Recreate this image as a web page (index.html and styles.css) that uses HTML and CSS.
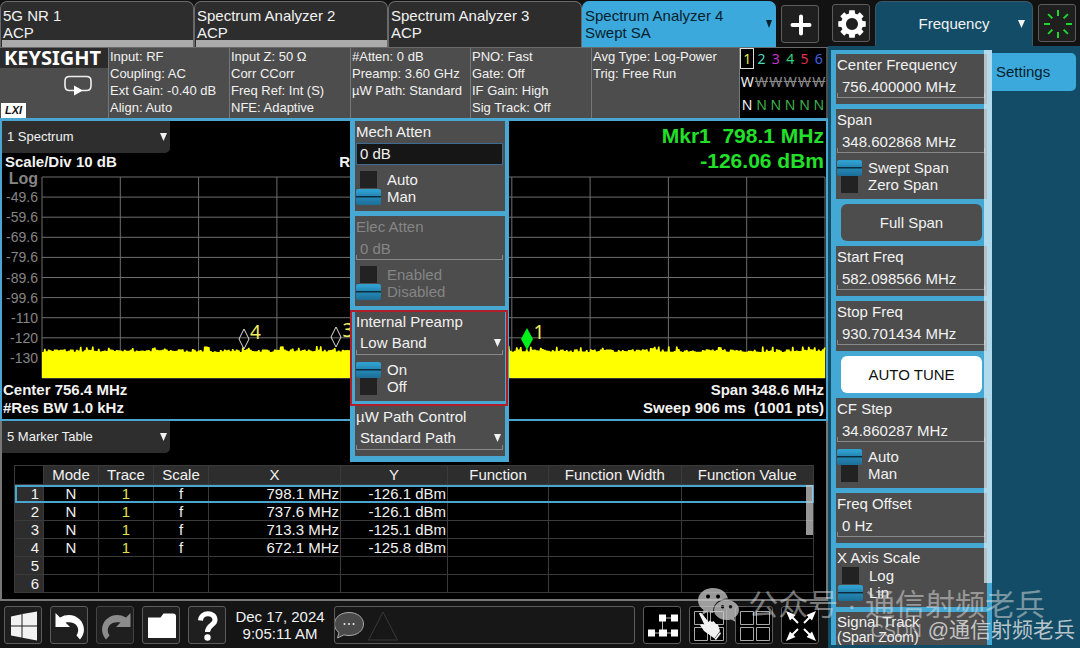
FILE: index.html
```html
<!DOCTYPE html>
<html lang="en">
<head>
<meta charset="utf-8">
<title>Spectrum Analyzer</title>
<link rel="stylesheet" href="styles.css">
</head>
<body>
<div class="app">
  <main class="main">
    <nav class="tabs">
      <button class="tab tab-busy"><span>5G NR 1</span><span>ACP</span></button>
      <button class="tab tab-busy"><span>Spectrum Analyzer 2</span><span>ACP</span></button>
      <button class="tab"><span>Spectrum Analyzer 3</span><span>ACP</span></button>
      <button class="tab tab-active"><span>Spectrum Analyzer 4</span><span>Swept SA</span><i class="arrow"></i></button>
      <button class="icon-btn tab-add" aria-label="Add screen">
        <svg width="38" height="38" viewBox="0 0 38 38"><path d="M19 10.500v17M10.500 19h17" stroke="#fff" stroke-width="4" stroke-linecap="round"/></svg>
      </button>
    </nav>

    <section class="meas">
      <div class="brand">
        <div class="logo">KEYSIGHT</div>
        <svg class="loop" width="30" height="22" viewBox="0 0 30 22"><path d="M11 15.500H6.500Q2 15.500 2 11V6Q2 1.500 6.500 1.500h17Q28 1.500 28 6v5q0 4.500-4.500 4.500H19" fill="none" stroke="#eee" stroke-width="1.600"/><path d="M11 10.500v10l9-5z" fill="#fff"/></svg>
        <div class="lxi">LXI</div>
      </div>
      <div class="meas-col"><span>Input: RF</span><span>Coupling: AC</span><span>Ext Gain: -0.40 dB</span><span>Align: Auto</span></div>
      <div class="meas-col"><span>Input Z: 50 Ω</span><span>Corr CCorr</span><span>Freq Ref: Int (S)</span><span>NFE: Adaptive</span></div>
      <div class="meas-col"><span>#Atten: 0 dB</span><span>Preamp: 3.60 GHz</span><span>µW Path: Standard</span></div>
      <div class="meas-col"><span>PNO: Fast</span><span>Gate: Off</span><span>IF Gain: High</span><span>Sig Track: Off</span></div>
      <div class="meas-col meas-last"><span>Avg Type: Log-Power</span><span>Trig: Free Run</span></div>
      <div class="traces">
        <b class="t1">1</b><b class="t2">2</b><b class="t3">3</b><b class="t4">4</b><b class="t5">5</b><b class="t6">6</b>
        <b>W</b><b class="off">W</b><b class="off">W</b><b class="off">W</b><b class="off">W</b><b class="off">W</b>
        <b>N</b><b class="on">N</b><b class="on">N</b><b class="on">N</b><b class="on">N</b><b class="on">N</b>
      </div>
    </section>

    <div class="windows">
      <section class="window window-active">
        <header class="spec-head">
          <div class="spec-left">
            <div class="drop win-title"><select aria-label="Spectrum window"><option>1 Spectrum</option></select><i class="arrow"></i></div>
            <div class="scale-row"><span>Scale/Div 10 dB</span><span>R</span></div>
          </div>
          <div class="mkr"><span>Mkr1&nbsp; 798.1 MHz</span><span>-126.06 dBm</span></div>
        </header>
        <div class="chart">
          <div class="y-axis"><b>Log</b><span>-49.6</span><span>-59.6</span><span>-69.6</span><span>-79.6</span><span>-89.6</span><span>-99.6</span><span>-110</span><span>-120</span><span>-130</span></div>
          <div class="plot">
            <svg class="plot-svg" viewBox="0 0 783 201" preserveAspectRatio="none"><path id="grid" class="grid"/><path id="trace" class="trace"/></svg>
            <div class="marker m4"><svg width="12" height="22" viewBox="0 0 12 22"><path d="M6 1l5 10-5 10L1 11z" fill="none" stroke="#ddd"/></svg><span>4</span></div>
            <div class="marker m3"><svg width="12" height="22" viewBox="0 0 12 22"><path d="M6 1l5 10-5 10L1 11z" fill="none" stroke="#ddd"/></svg><span>3</span></div>
            <div class="marker m1"><svg width="12" height="22" viewBox="0 0 12 22"><path d="M6 0l6 11-6 11L0 11z" fill="#00f01c"/></svg><span>1</span></div>
          </div>
        </div>
        <footer class="spec-foot">
          <div><span>Center 756.4 MHz</span><span>Span 348.6 MHz</span></div>
          <div><span>#Res BW 1.0 kHz</span><span>Sweep 906 ms&nbsp; (1001 pts)</span></div>
        </footer>
      </section>

      <section class="window window-table">
        <div class="drop win-title"><select aria-label="Marker table window"><option>5 Marker Table</option></select><i class="arrow"></i></div>
        <div class="table-wrap">
          <table>
            <colgroup><col class="c-n"><col class="c-s"><col class="c-s"><col class="c-s"><col class="c-x"><col class="c-y"><col class="c-f"><col class="c-w"><col class="c-w"></colgroup>
            <thead><tr><td class="corner"></td><th>Mode</th><th>Trace</th><th>Scale</th><th>X</th><th>Y</th><th>Function</th><th>Function Width</th><th>Function Value</th></tr></thead>
            <tbody>
              <tr class="selected"><th>1</th><td>N</td><td class="yl">1</td><td>f</td><td class="num">798.1 MHz</td><td class="num">-126.1 dBm</td><td></td><td></td><td></td></tr>
              <tr><th>2</th><td>N</td><td class="yl">1</td><td>f</td><td class="num">737.6 MHz</td><td class="num">-126.1 dBm</td><td></td><td></td><td></td></tr>
              <tr><th>3</th><td>N</td><td class="yl">1</td><td>f</td><td class="num">713.3 MHz</td><td class="num">-125.1 dBm</td><td></td><td></td><td></td></tr>
              <tr><th>4</th><td>N</td><td class="yl">1</td><td>f</td><td class="num">672.1 MHz</td><td class="num">-125.8 dBm</td><td></td><td></td><td></td></tr>
              <tr><th>5</th><td></td><td></td><td></td><td></td><td></td><td></td><td></td><td></td></tr>
              <tr><th>6</th><td></td><td></td><td></td><td></td><td></td><td></td><td></td><td></td></tr>
            </tbody>
          </table>
          <div class="table-thumb"></div>
        </div>
      </section>

      <aside class="popup">
        <div class="item">
          <label for="mech">Mech Atten</label>
          <input id="mech" class="value value-edit" value="0 dB">
          <div class="switch">
            <label><input type="radio" name="mech-mode">Auto</label>
            <label><input type="radio" name="mech-mode" checked>Man</label>
          </div>
        </div>
        <div class="item item-off">
          <label for="elec">Elec Atten</label>
          <input id="elec" class="value" value="0 dB" disabled>
          <div class="switch">
            <label><input type="radio" name="elec-mode" disabled>Enabled</label>
            <label><input type="radio" name="elec-mode" checked disabled>Disabled</label>
          </div>
        </div>
        <div class="item item-marked">
          <label for="preamp">Internal Preamp</label>
          <div class="drop"><select id="preamp" class="value"><option>Low Band</option></select><i class="arrow"></i></div>
          <div class="switch">
            <label><input type="radio" name="preamp-mode" checked>On</label>
            <label><input type="radio" name="preamp-mode">Off</label>
          </div>
        </div>
        <div class="item">
          <label for="path">µW Path Control</label>
          <div class="drop"><select id="path" class="value"><option>Standard Path</option></select><i class="arrow"></i></div>
        </div>
      </aside>
    </div>

    <footer class="toolbar">
      <button class="icon-btn" aria-label="Windows"><svg width="38" height="38" viewBox="0 0 38 38"><path d="M6 9.500l10.500-2.200v11.200H6zM17.500 7L32 4.500v14H17.500zM6 19.500h10.500v11L6 28.500zM17.500 19.500H32v14l-14.500-2.800z" fill="#f2f2f2"/></svg></button>
      <button class="icon-btn" aria-label="Undo"><svg width="38" height="38" viewBox="0 0 38 38"><path d="M4.500 6L9 10.500C20 4 33 11 33 23Q32.500 28.500 29 32.500L25.500 28.500C30.500 20.500 24 13.500 14.500 15.500L19 20H4.500z" fill="#fff"/></svg></button>
      <button class="icon-btn dim" aria-label="Redo"><svg width="38" height="38" viewBox="0 0 38 38"><path d="M33.500 6L29 10.500C18 4 5 11 5 23Q5.500 28.500 9 32.500L12.500 28.500C7.500 20.500 14 13.500 23.500 15.500L19 20H33.500z" fill="#8c8c8c"/></svg></button>
      <button class="icon-btn" aria-label="Files"><svg width="38" height="38" viewBox="0 0 38 38"><path d="M5 10.500h12.500l3-4h9.500q3 0 3 3V31H5z" fill="#fff"/></svg></button>
      <button class="icon-btn" aria-label="Help"><svg width="38" height="38" viewBox="0 0 38 38"><path d="M11.500 13.500C12 4.500 26 4.500 26 13C26 18.500 18.500 17.500 18.500 25" fill="none" stroke="#fff" stroke-width="5"/><circle cx="18.500" cy="30.500" r="3.200" fill="#fff"/></svg></button>
      <div class="clock"><span>Dec 17, 2024</span><span>9:05:11 AM</span></div>
      <div class="message">
        <svg width="72" height="36" viewBox="0 0 72 36"><path d="M14 5.500c8.500 0 14.500 5 14.500 11.500S22.500 28.500 14 28.500c-2 0-3.500-.2-5-.7L2.500 31l1.500-5.500C1 23.500-.5 20.500-.5 17-.5 10.500 5.500 5.500 14 5.500z" fill="#4a4a4a" stroke="#aaa"/><g fill="#eee"><circle cx="9.500" cy="17" r="1"/><circle cx="14" cy="17" r="1"/><circle cx="18.500" cy="17" r="1"/></g><path d="M48 5L62.500 33h-29z" fill="none" stroke="#383838"/></svg>
      </div>
      <button class="icon-btn black" aria-label="Sequencer"><svg width="38" height="38" viewBox="0 0 38 38"><path d="M18.500 11h12M18.500 11v15M7 26h24" stroke="#bbb" fill="none"/><path d="M15 7.500h7v7h-7zM27 7.500h7v7h-7zM4 22.500h7v7H4zM15 22.500h8v7h-8zM27 22.500h7v7h-7z" fill="#fff"/></svg></button>
      <button class="icon-btn black" aria-label="Touch layout"><svg width="38" height="38" viewBox="0 0 38 38"><path d="M4.500 4.500h13v13h-13zM20.500 4.500h13v13h-13zM4.500 20.500h13v13h-13zM20.500 20.500h13v13h-13z" fill="none" stroke="#aaa"/><path d="M9 6.500q1-1.500 3 0l6.500 8.500 1-1.500 2.500 1.500 1.500-1 2.500 3 2 .5 2 6.500-5.500 7.500-10.500-7.500-4-6 2-1 2.500 1zM24.500 32l5.500-7 1 1.500-5 6.500z" fill="#f2f2f2"/></svg></button>
      <button class="icon-btn black" aria-label="Grid layout"><svg width="38" height="38" viewBox="0 0 38 38"><path d="M4.500 4.500h13v13h-13zM20.500 4.500h13v13h-13zM4.500 20.500h13v13h-13zM20.500 20.500h13v13h-13z" fill="none" stroke="#aaa"/></svg></button>
      <button class="icon-btn black" aria-label="Full screen"><svg width="38" height="38" viewBox="0 0 38 38"><path d="M7 7l9 9M31 7l-9 9M7 31l9-9M31 31l-9-9" stroke="#fff" stroke-width="2"/><path d="M4 4l9.500 4-5.500 5.500zM34 4l-9.500 4 5.500 5.500zM4 34l9.500-4L8 24.500zM34 34l-9.500-4 5.500-5.500z" fill="#fff"/></svg></button>
    </footer>
  </main>

  <aside class="side">
    <header class="side-head">
      <button class="icon-btn" aria-label="Setup"><svg width="38" height="38" viewBox="0 0 38 38"><path id="gear-path" fill="#fff" fill-rule="evenodd"/></svg></button>
      <div class="drop side-title"><select aria-label="Menu"><option>Frequency</option></select><i class="arrow"></i></div>
      <button class="icon-btn" aria-label="Sweep status"><svg width="38" height="38" viewBox="0 0 38 38"><path d="M19 5v6M19 27v6M5 19h6M27 19h6M9.100 9.100l4.300 4.300M24.600 24.600l4.300 4.300M28.900 9.100l-4.300 4.300M13.400 24.600l-4.300 4.300" stroke="#1fd62e" stroke-width="2"/></svg></button>
    </header>
    <div class="side-body">
      <div class="menu">
        <div class="item"><label for="cf">Center Frequency</label><input id="cf" class="value" value="756.400000 MHz"></div>
        <div class="item">
          <label for="span">Span</label><input id="span" class="value" value="348.602868 MHz">
          <div class="switch">
            <label><input type="radio" name="span-mode" checked>Swept Span</label>
            <label><input type="radio" name="span-mode">Zero Span</label>
          </div>
        </div>
        <button class="menu-btn">Full Span</button>
        <div class="item"><label for="start">Start Freq</label><input id="start" class="value" value="582.098566 MHz"></div>
        <div class="item"><label for="stop">Stop Freq</label><input id="stop" class="value" value="930.701434 MHz"></div>
        <button class="menu-btn menu-btn-light">AUTO TUNE</button>
        <div class="item">
          <label for="step">CF Step</label><input id="step" class="value" value="34.860287 MHz">
          <div class="switch">
            <label><input type="radio" name="step-mode" checked>Auto</label>
            <label><input type="radio" name="step-mode">Man</label>
          </div>
        </div>
        <div class="item"><label for="offset">Freq Offset</label><input id="offset" class="value" value="0 Hz"></div>
        <fieldset class="item item-axis">
          <legend>X Axis Scale</legend>
          <div class="switch">
            <label><input type="radio" name="axis">Log</label>
            <label><input type="radio" name="axis" checked>Lin</label>
          </div>
        </fieldset>
        <div class="item item-track"><span>Signal Track</span><small>(Span Zoom)</small></div>
        <div class="menu-thumb"></div>
      </div>
      <button class="side-tab">Settings</button>
    </div>
  </aside>

  <div class="stamp stamp-top">
    <svg width="42" height="34" viewBox="0 0 42 34"><path fill-rule="evenodd" d="M15 0C6.500 0 0 5.500 0 12.500c0 4 2 7 5.500 9.500L4 27l5.500-3q3 1 6 1C14 17 20 10.500 30 10.500 28.500 4 22.500 0 15 0zM10 6.500a2 2 0 1 0 .1 0zM20 6.500a2 2 0 1 0 .1 0z" fill="#ccc"/><path fill-rule="evenodd" d="M28.500 12C21.500 12 16 16.500 16 22s5.500 10 12.500 10q2.500 0 4.500-.6l4.500 2.400-1.200-4Q41 26.500 41 22c0-5.500-5.500-10-12.500-10zM24.500 17a1.700 1.700 0 1 0 .1 0zM32.500 17a1.700 1.700 0 1 0 .1 0z" fill="#ccc"/></svg>
    <span>公众号 · 通信射频老兵</span>
  </div>
  <div class="stamp stamp-low"><small>CSDN</small> @通信射频老兵</div>
</div>
<script src="app.js"></script>
</body>
</html>
```
FILE: styles.css
```css
* { box-sizing: border-box; }
body {
  margin: 0;
  background: #121212;
  color: #f2f2f2;
  font: 15px/18px "Liberation Sans", Arial, sans-serif;
}
button, input, select { font: inherit; color: inherit; border: 0; background: none; padding: 0; margin: 0; border-radius: 0; }
select { appearance: none; width: 100%; height: 100%; }
svg { display: block; }

.app { position: relative; display: grid; grid-template-columns: minmax(0, 1fr) 252px; min-height: 100vh; overflow: hidden; }
.main { display: grid; grid-template-rows: 47px auto 1fr 47px; min-width: 0; }

.arrow { width: 7px; height: 8px; background: currentColor; clip-path: polygon(0 0, 100% 0, 50% 100%); }
.drop { position: relative; }
.drop .arrow { position: absolute; right: 3px; top: 50%; margin-top: -4px; pointer-events: none; }
.icon-btn { width: 38px; height: 38px; flex: none; border: 1px solid #5c5c5c; border-radius: 3px; background: #1f1f1f; display: grid; place-items: center; }
.icon-btn.black { background: #000; }
.icon-btn.dim { border-color: #444; }

/* Screen tabs */
.tabs { display: flex; align-items: flex-start; padding: 1px 9px 0 0; }
.tab { position: relative; flex: 1; height: 46px; display: flex; flex-direction: column; align-items: flex-start; padding: 5px 2px 0; line-height: 17px; background: #2d2d2d; border: 1px solid #6a6a6a; border-bottom: 0; border-radius: 7px 7px 0 0; text-align: left; }
.tab-busy { background: linear-gradient(#ababab, #ababab) 1px 100% / 100% 7px no-repeat #2d2d2d; }
.tab-active { background: #3ba9dc; border-color: #3ba9dc; color: #08202c; }
.tab .arrow { position: absolute; right: 3px; top: 18px; width: 6px; }
.tab-add { margin: 4px 0 0 5px; }

/* Measurement bar */
.meas { display: grid; grid-template-columns: 108px 121px 121px 120px 121px 1fr 89px; height: 71px; background: #4d4d4d; border-top: 1px solid #6a6a6a; font-size: 14px; line-height: 17px; }
.brand { display: flex; flex-direction: column; justify-content: space-between; align-items: flex-start; }
.logo { align-self: stretch; background: #2b2b2b; font: bold 20px/20px "Noto Sans", sans-serif; padding-left: 4px; color: #fff; }
.loop { margin-left: 63px; }
.lxi { background: #fff; color: #111; font: italic bold 11px/15px "Liberation Sans", Arial, sans-serif; padding: 0 4px; margin-left: 1px; }
.meas-col { display: flex; flex-direction: column; border-left: 1px solid #777; padding-left: 1px; font-size: 13px; white-space: nowrap; }
.meas-last { min-width: 0; }
.traces { display: grid; grid-template-columns: repeat(6, 1fr); grid-template-rows: 21px 24px 23px; background: #000; border-left: 1px solid #777; margin-right: 2px; font: 14px/21px "Noto Sans", sans-serif; text-align: center; }
.traces b { font-weight: normal; display: flex; justify-content: center; align-items: center; }
.traces .t1 { color: #e9e84a; border: 1px solid #ddd; }
.traces .t2 { color: #48d9b8; }
.traces .t3 { color: #c832d0; }
.traces .t4 { color: #35d37e; }
.traces .t5 { color: #e22e4e; }
.traces .t6 { color: #4660e0; }
.traces .off { color: #8a8a8a; text-decoration: line-through; }
.traces .on { color: #3fb04a; }

/* Windows */
.windows { position: relative; display: flex; flex-direction: column; min-width: 0; }
.window { background: #000; border: 2px solid #777; border-top: 0; }
.window-active { flex: 1; display: flex; flex-direction: column; border: 2px solid #4aa5d0; border-top-width: 3px; }
.window-table { padding-bottom: 6px; }
.win-title { width: 168px; height: 32px; background: #2e2e2e; border-radius: 0 0 5px 0; font-size: 13px; }
.win-title select { padding-left: 5px; }

.spec-head { display: flex; justify-content: space-between; }
.spec-left { width: 348px; }
.scale-row { display: flex; justify-content: space-between; padding: 0 0 6px 3px; font-weight: bold; }
.mkr { display: flex; flex-direction: column; align-items: flex-end; padding: 2px 2px 0 0; font: bold 21px/25px "Liberation Sans", Arial, sans-serif; color: #22e02a; }
.chart { flex: 1; min-height: 200px; display: flex; }
.y-axis { width: 40px; display: flex; flex-direction: column; margin: -10px 0 10px; padding-right: 4px; text-align: right; font-size: 14px; color: #858585; }
.y-axis > * { flex: 1 1 0; min-height: 0; display: flex; align-items: center; justify-content: flex-end; }
.y-axis b { font-size: 16px; align-items: flex-end; line-height: 16px; }
.plot { position: relative; flex: 1; min-width: 0; margin-right: 1px; }
.plot-svg { position: absolute; width: 100%; height: 100%; overflow: visible; }
.grid { fill: none; stroke: #6e6e6e; vector-effect: non-scaling-stroke; }
.trace { fill: #ffff00; }
.marker { position: absolute; display: flex; margin-left: -6px; color: #f0ee62; font: 19px/16px "Noto Sans", sans-serif; }
.marker span { margin-top: -4px; }
.m4 { left: 25.8%; top: 75%; }
.m3 { left: 37.6%; top: 74%; }
.m1 { left: 62%; top: 75%; }
.spec-foot { padding: 3px 2px 2px 1px; font-weight: bold; }
.spec-foot div { display: flex; justify-content: space-between; }

/* Marker table */
.table-wrap { position: relative; margin: 12px 12px 0; }
table { width: 100%; table-layout: fixed; border-collapse: collapse; }
.c-n { width: 29px; }
.c-s { width: 55px; }
.c-x { width: 132px; }
.c-y { width: 107px; }
.c-f { width: 101px; }
th, td { height: 18px; line-height: 17px; padding: 0 1px; border: 1px solid #3a3a3a; font-weight: normal; text-align: center; white-space: nowrap; }
th { background: #2d2d2d; }
thead th { height: 19px; line-height: 18px; }
tbody th { text-align: right; padding-right: 4px; }
td.num { text-align: right; }
td.yl { color: #e0e04c; }
.selected { outline: 2px solid #4aa5d0; outline-offset: -2px; }
.table-thumb { position: absolute; right: 1px; top: 20px; width: 7px; height: 50px; background: rgba(200, 200, 200, .75); }

/* Menu items shared by the popup and the side menu */
.item { position: relative; margin: 0; min-width: 0; border: 0; background: #4d4d4d; padding: 2px 2px 6px 1px; display: flex; flex-direction: column; }
.item legend { padding: 0; float: left; }
.item .value { width: 100%; height: 22px; margin-top: 2px; padding: 0 0 2px 4px; background: linear-gradient(#888, #888) 0 100% / 100% 1px no-repeat, linear-gradient(#888, #888) 0 100% / 1px 5px no-repeat, linear-gradient(#888, #888) 100% 100% / 1px 5px no-repeat; }
.item .value-edit { background: #161616; border: 1px solid #3f6a92; padding-left: 3px; }
.item-off { color: #858585; }
.drop .value { display: block; }
.switch { display: flex; flex-direction: column; margin-top: 6px; }
.switch label { display: flex; align-items: center; gap: 6px; height: 17px; line-height: 17px; }
.switch input { appearance: none; width: 25px; height: 17px; background: linear-gradient(#222, #222) 50% 0 / 17px 17px no-repeat; }
.switch input:checked { height: 16px; border-radius: 2px; background: linear-gradient(#2f9fd0 0 2px, #2485b2 7px, #0d2c3d 7px 8px, #2485b2 9px, #1c6e98 16px); }

.popup { position: absolute; left: 350px; top: 0; width: 159px; display: flex; flex-direction: column; gap: 5px; padding: 3px 4px 6px 5px; background: #48a8d4; }
.popup .drop .arrow { right: 2px; }
.item-marked::after { content: ""; position: absolute; inset: -1px -3px -5px -5px; border: 2px solid #b01f28; pointer-events: none; }

/* Toolbar */
.toolbar { display: flex; align-items: flex-start; gap: 8px; padding: 5px 9px 0 4px; background: #141414; }
.clock { display: flex; flex-direction: column; align-items: center; width: 92px; line-height: 17px; padding-top: 2px; }
.message { flex: 1; height: 38px; border: 1px solid #5c5c5c; border-radius: 3px; background: #171717; }

/* Side menu */
.side { display: flex; flex-direction: column; }
.side-head { display: flex; gap: 5px; padding: 1px 4px 0; height: 46px; }
.side-head .icon-btn { margin-top: 3px; }
.side-title { flex: 1; background: #134c66; border: 1px solid #3d5966; border-bottom: 0; border-radius: 7px 7px 0 0; }
.side-title select { text-align: center; text-align-last: center; }
.side-title .arrow { right: 7px; }
.side-body { flex: 1; display: flex; align-items: flex-start; padding: 4px 4px 3px 3px; background: #134c66; }
.menu { position: relative; width: 161px; flex: none; align-self: stretch; display: flex; flex-direction: column; gap: 5px; padding: 4px 5px 0; background: #43a8d4; }
.menu .item .value { padding-left: 5px; }
.menu-btn { height: 37px; margin: 0 5px; border-radius: 6px; background: #4d4d4d; }
.menu-btn-light { background: #fff; color: #111; }
.item-axis { display: block; padding: 1px 2px 6px 1px; }
.item-axis .switch { clear: both; margin: 0 0 0 1px; }
.item-track { flex: 1; padding-top: 1px; padding-bottom: 0; line-height: 17px; }
.item-track small { font-size: 14px; line-height: 15px; }
.menu-thumb { position: absolute; right: 0; top: 0; width: 8px; height: 533px; background: rgba(225, 240, 248, .7); }
.side-tab { flex: 1; height: 38px; margin-top: 3px; padding-left: 4px; text-align: left; background: #3ba9dc; color: #08202c; border-radius: 0 5px 5px 0; }

/* Overprint */
.stamp { position: absolute; color: rgba(225, 225, 225, .5); font-family: "Liberation Sans", "Noto Sans CJK SC", sans-serif; white-space: nowrap; pointer-events: none; }
.stamp-top { right: 35px; bottom: 23px; display: flex; align-items: center; gap: 8px; font-size: 30px; line-height: 40px; }
.stamp-top svg { opacity: .75; }
.stamp-low { right: 5px; bottom: 2px; font-size: 21px; line-height: 30px; color: rgba(230, 230, 230, .8); }
.stamp-low small { font-size: 18px; color: rgba(220, 220, 220, .6); }
```
FILE: app.js
```js
// Graticule: 10 x 10 divisions
let grid = "";
for (let i = 0; i <= 10; i++) {
  grid += `M${i * 78.3} 0V201M0 ${i * 20.1}H783`;
}
document.getElementById("grid").setAttribute("d", grid);

// Noise floor from a seeded generator, so every load draws the same sweep
let seed = 7;
const rand = () => (seed = (seed * 16807) % 2147483647) / 2147483647;
let trace = "M0 201";
for (let x = 0; x < 783; x += 2) {
  const r = rand();
  const y = 175 - (r > 0.82 ? 2 + rand() * 4 : r * 3.4);
  trace += `L${x} ${y.toFixed(1)}L${x + 1.5} ${y.toFixed(1)}`;
}
document.getElementById("trace").setAttribute("d", trace + "L783 174V201Z");

// Gear: eight teeth around a ring
const pts = [];
for (let i = 0; i < 8; i++) {
  for (const [off, r] of [[-0.28, 11], [-0.2, 14], [0.2, 14], [0.28, 11]]) {
    const a = i * Math.PI / 4 + off;
    pts.push((19 + r * Math.cos(a)).toFixed(2) + " " + (19 + r * Math.sin(a)).toFixed(2));
  }
}
document.getElementById("gear-path").setAttribute("d",
  "M" + pts.join("L") + "ZM19 13a6 6 0 1 0 .01 0Z");
```
